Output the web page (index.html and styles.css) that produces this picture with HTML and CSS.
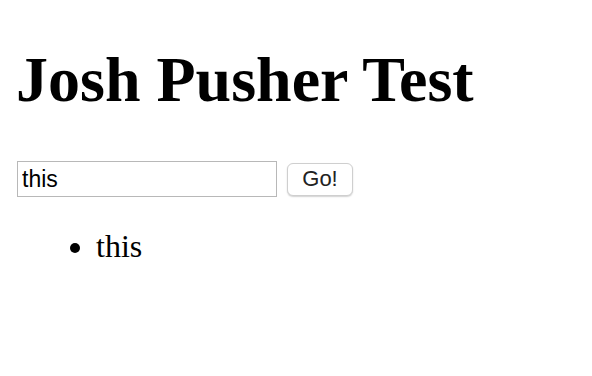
FILE: index.html
```html
<!DOCTYPE html>
<html>
<head>
<meta charset="utf-8">
<title>Josh Pusher Test</title>
<link rel="stylesheet" href="styles.css">
</head>
<body>
<h1 class="title">Josh Pusher Test</h1>
<form class="form">
  <input class="field" type="text" value="this">
  <button class="go" type="button">Go!</button>
</form>
<ul class="list">
  <li>this</li>
</ul>
</body>
</html>
```
FILE: styles.css
```css
body {
  margin: 0 16px 16px;
  padding-top: 1px;
  font-family: "Liberation Serif", "Times New Roman", serif;
  font-size: 32px;
  color: #000;
  background: #fff;
}
.title {
  font-size: 64px;
  font-weight: bold;
  margin: 42px 0 45px;
  line-height: 73px;
}
.form {
  display: flex;
  align-items: center;
  gap: 10px;
  margin: 0 0 0 1px;
}
.field {
  box-sizing: border-box;
  width: 260px;
  height: 36px;
  margin: 0;
  padding: 0 4px;
  border: 1px solid #b8b8b8;
  font-family: "Liberation Sans", Arial, sans-serif;
  font-size: 23px;
  color: #000;
  outline: none;
}
.go {
  box-sizing: border-box;
  width: 66px;
  height: 33px;
  margin: 0;
  padding: 0;
  border: 1px solid #cfcfcf;
  border-radius: 6px;
  background: #fff;
  box-shadow: 0 1px 1.5px rgba(0,0,0,0.18);
  font-family: "Liberation Sans", Arial, sans-serif;
  font-size: 22px;
  color: #222;
}
.list {
  margin: 31px 0;
  padding-left: 80px;
  line-height: 37px;
}
```
